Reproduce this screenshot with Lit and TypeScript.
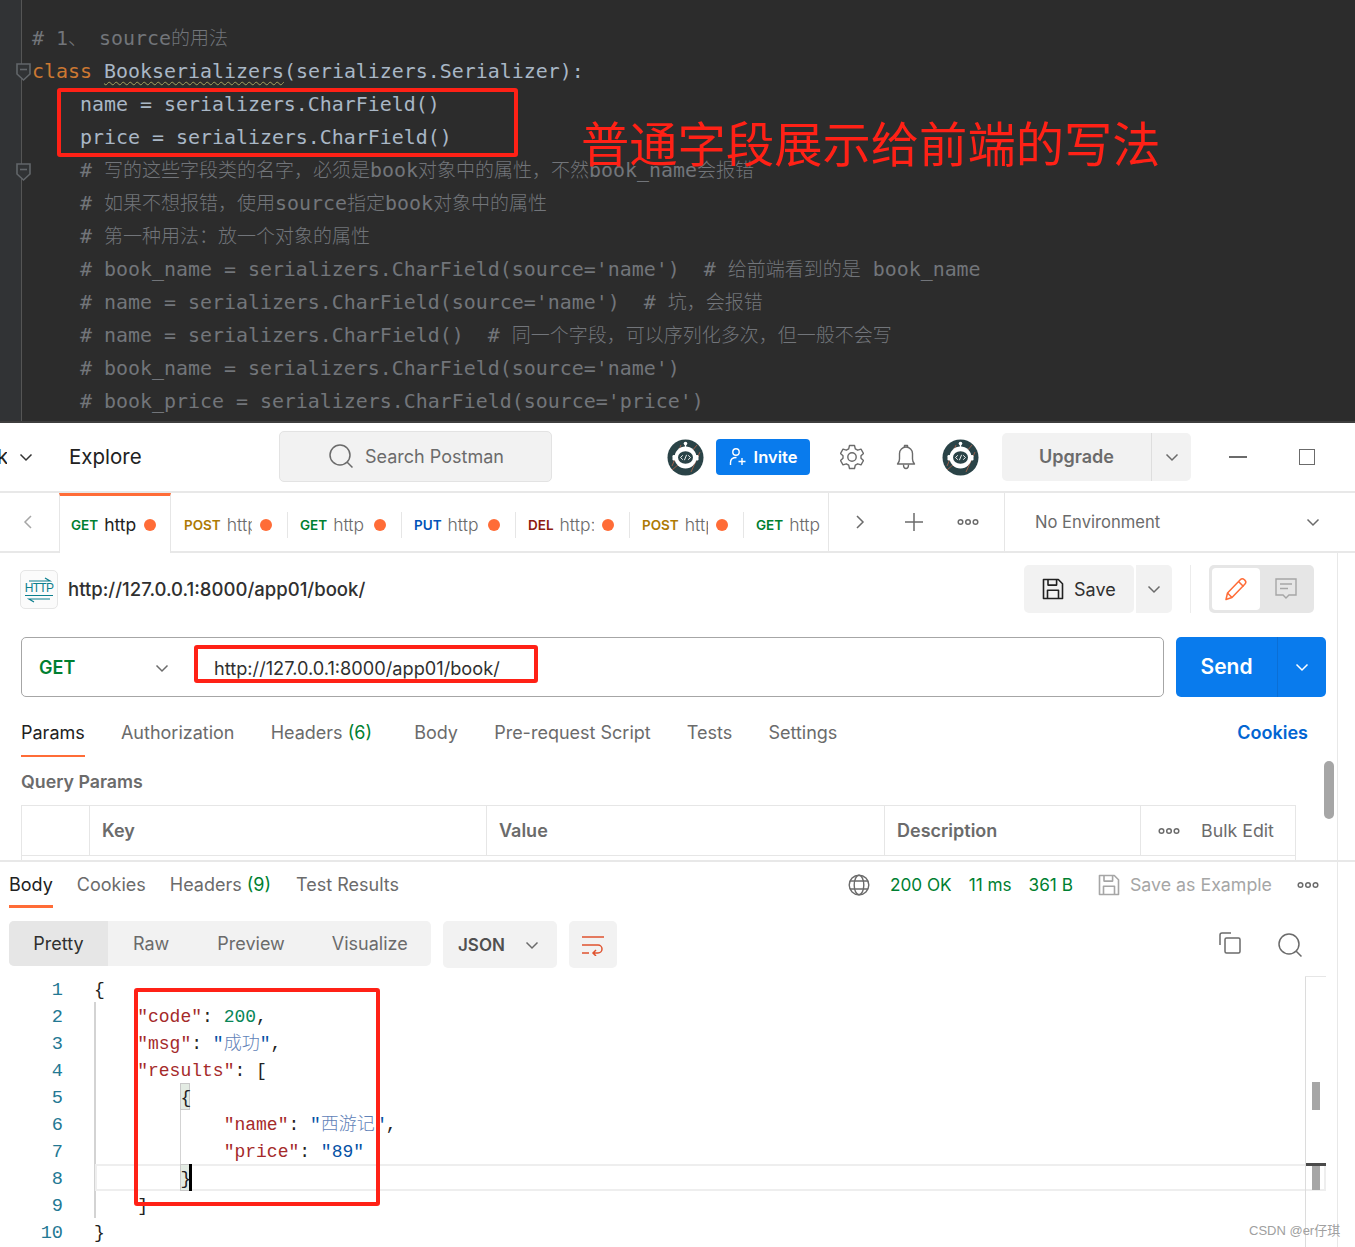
import { LitElement, html, css } from "lit";
import { customElement } from "lit/decorators.js";

const chev = (c = "#6b6b6b", s = 16) => html`<svg width=${s} height=${s} viewBox="0 0 16 16" fill="none" stroke=${c} stroke-width="1.5"><path d="M2.5 5.5 8 11l5.5-5.5"/></svg>`;
const dots = (c = "#6b6b6b") => html`<svg width="22" height="8" viewBox="0 0 22 8" fill="none" stroke=${c} stroke-width="1.5"><circle cx="3.5" cy="4" r="2.3"/><circle cx="11" cy="4" r="2.3"/><circle cx="18.5" cy="4" r="2.3"/></svg>`;
const search = (c = "#6b6b6b") => html`<svg width="26" height="26" viewBox="0 0 26 26" fill="none" stroke=${c} stroke-width="1.5"><circle cx="12" cy="12" r="10"/><path d="m19 19 5.5 5.5"/></svg>`;
const avatar = () => html`<svg width="37" height="37" viewBox="0 0 37 37">
  <circle cx="18.5" cy="18.5" r="18" fill="#2a4347"/>
  <path d="M5 27 14 6M24 33l9-20M30 6 25 12M5 31l7-6" stroke="#b5644a" stroke-width=".8" fill="none"/>
  <circle cx="18.5" cy="4.5" r="1.8" fill="#fff"/><path d="M18.5 5v4" stroke="#fff" stroke-width="1.4"/>
  <circle cx="18.5" cy="18.5" r="11" fill="#fff"/><rect x="5.5" y="16" width="3" height="5.5" rx="1.2" fill="#fff"/><rect x="28.5" y="16" width="3" height="5.5" rx="1.2" fill="#fff"/>
  <ellipse cx="18.5" cy="18.5" rx="7.5" ry="6.2" fill="#2a4347"/>
  <path d="m15.8 16.3-2.3 2.2 2.3 2.2M21.2 16.3l2.3 2.2-2.3 2.2M19.6 15.8l-2.2 5.4" stroke="#fff" stroke-width=".9" fill="none"/></svg>`;
const floppy = (c: string) => html`<svg width="22" height="22" viewBox="0 0 22 22" fill="none" stroke=${c} stroke-width="1.6" stroke-linejoin="round"><path d="M1.5 1.5h14.8l4.2 4.2v14.8H1.5z"/><path d="M6 1.5v5.6h8.6V1.5M5.5 20.5v-8.2h11v8.2"/></svg>`;

interface Tab { m: string; cls: string; label: string; dot: boolean; active?: boolean; }
const tabs: Tab[] = [
  { m: "GET", cls: "get", label: "http", dot: true, active: true },
  { m: "POST", cls: "post", label: "http://", dot: true },
  { m: "GET", cls: "get", label: "http", dot: true },
  { m: "PUT", cls: "put", label: "http", dot: true },
  { m: "DEL", cls: "del", label: "http://", dot: true },
  { m: "POST", cls: "post", label: "http://", dot: true },
  { m: "GET", cls: "get", label: "http", dot: false },
];

@customElement("code-panel")
class CodePanel extends LitElement {
  static styles = css`
    :host { display: flex; height: 423px; box-sizing: border-box; background: #2c2c2c; border-bottom: 2px solid #3e3e3e; overflow: hidden; font: 19.93px "DejaVu Sans Mono", "Noto Sans CJK SC", monospace; color: #a9b7c6; }
    .gutter { width: 22px; flex: none; background: #313335; border-right: 1px solid #555; position: relative; box-sizing: border-box; }
    .fold { position: absolute; left: 16px; }
    .lines { padding: 22px 0 0 10px; flex: 1; }
    .l { height: 33px; line-height: 33px; white-space: pre; }
    .c { color: #72757a; }
    .z { font-size: 19px; line-height: 0; font-family: "Noto Sans CJK SC", sans-serif; font-weight: 300; }
    .k { color: #cc7832; }
    .w { text-decoration: underline wavy #a5a25e 1px; text-underline-offset: 3px; }
  `;
  render() {
    const fold = (y: number) => html`<svg class="fold" style="top:${y}px" width="15" height="19" viewBox="0 0 15 19" fill="none" stroke="#62666a" stroke-width="1.6"><path d="M1 1h13v10l-6.5 6L1 11z" fill="#313335"/><path d="M4 6.5h7"/></svg>`;
    const z = (t: string) => html`<span class="z">${t}</span>`;
    return html`
      <div class="gutter">${fold(63)}${fold(163)}</div>
      <div class="lines">
        <div class="l c"># 1${z("、")} source${z("的用法")}</div>
        <div class="l"><span class="k">class</span> <span class="w">Bookserializers</span>(serializers.Serializer):</div>
        <div class="l">    name = serializers.CharField()</div>
        <div class="l">    price = serializers.CharField()</div>
        <div class="l c">    # ${z("写的这些字段类的名字，必须是")}book${z("对象中的属性，不然")}book_name${z("会报错")}</div>
        <div class="l c">    # ${z("如果不想报错，使用")}source${z("指定")}book${z("对象中的属性")}</div>
        <div class="l c">    # ${z("第一种用法：放一个对象的属性")}</div>
        <div class="l c">    # book_name = serializers.CharField(source='name')  # ${z("给前端看到的是")} book_name</div>
        <div class="l c">    # name = serializers.CharField(source='name')  # ${z("坑，会报错")}</div>
        <div class="l c">    # name = serializers.CharField()  # ${z("同一个字段，可以序列化多次，但一般不会写")}</div>
        <div class="l c">    # book_name = serializers.CharField(source='name')</div>
        <div class="l c">    # book_price = serializers.CharField(source='price')</div>
      </div>`;
  }
}

@customElement("pm-header")
class PmHeader extends LitElement {
  static styles = css`
    :host { display: flex; align-items: center; height: 70px; box-sizing: border-box; border-bottom: 2px solid #e8e8e8; font-family: Inter, sans-serif; position: relative; color: #212121; }
    .k { width: 10px; margin: 0 0 2px -3px; font-size: 20.5px; overflow: hidden; }
    .k-chev { margin: 0 0 0 11px; display: flex; }
    .explore { font-size: 20.5px; margin: 0 0 2px 35px; width: 210px; }
    .searchbox { width: 273px; height: 51px; box-sizing: border-box; background: #f2f2f2; border: 1px solid #e3e3e3; border-radius: 5px; display: flex; align-items: center; padding-left: 48px; gap: 11px; font-size: 18px; color: #6b6b6b; margin-bottom: 2px; }
    .av { display: flex; }
    .first { margin-left: 115px; }
    .invite { width: 94px; height: 36px; margin-left: 12px; background: #097bed; border-radius: 4px; color: #fff; font-weight: 600; font-size: 16.5px; display: flex; align-items: center; justify-content: center; gap: 7px; box-sizing: border-box; }
    .ico { display: flex; }
    .gear { margin-left: 30px; }
    .bell { margin-left: 32px; }
    .av2 { margin-left: 26px; }
    .up { margin-left: 23px; width: 189px; height: 48px; background: #f2f2f2; border-radius: 5px; display: flex; align-items: center; color: #6b6b6b; font-size: 18px; font-weight: 600; }
    .up .t { width: 149px; text-align: center; border-right: 1px solid #dedede; line-height: 48px; }
    .up .d { flex: 1; display: flex; justify-content: center; }
    .min { margin-left: 38px; width: 18px; height: 2px; background: #6b6b6b; }
    .max { margin-left: 52px; width: 16px; height: 16px; border: 1.5px solid #6b6b6b; box-sizing: border-box; }
  `;
  render() {
    return html`
      <div class="k">k</div><div class="k-chev">${chev("#333")}</div>
      <div class="explore">Explore</div>
      <div class="searchbox">${search()}<span>Search Postman</span></div>
      <div class="av first">${avatar()}</div>
      <div class="invite"><svg width="18" height="20" viewBox="0 0 18 20" fill="none" stroke="#fff" stroke-width="1.4"><circle cx="7" cy="5" r="3.2"/><path d="M1.5 18v-2.500C1.500 12 4 10.500 7.500 10.500M13 11v7M9.500 14.500h7"/></svg><span>Invite</span></div>
      <div class="ico gear"><svg width="24" height="26" viewBox="0 0 24 26" fill="none" stroke="#6b6b6b" stroke-width="1.4" stroke-linejoin="round"><circle cx="12" cy="13" r="4.2"/><path d="M9.5 1.5h5l.8 3.3 2.4 1.4 3.3-1 2.5 4.3-2.5 2.3v2.4l2.5 2.3-2.5 4.3-3.3-1-2.4 1.4-.8 3.3h-5l-.8-3.3-2.4-1.4-3.3 1L.5 16.5 3 14.2v-2.4L.5 9.5 3 5.2l3.3 1 2.4-1.4z"/></svg></div>
      <div class="ico bell"><svg width="20" height="26" viewBox="0 0 20 26" fill="none" stroke="#6b6b6b" stroke-width="1.4" stroke-linejoin="round"><path d="M1.5 20c1.5-1.5 2-3 2-5V9.500a6.500 6.500 0 0 1 13 0V15c0 2 .5 3.500 2 5z"/><path d="M8.500 3.200V1.500h3v1.700M7.500 20.500a2.500 4 0 0 0 5 0"/></svg></div>
      <div class="av av2">${avatar()}</div>
      <div class="up"><div class="t">Upgrade</div><div class="d">${chev()}</div></div>
      <div class="min"></div><div class="max"></div>`;
  }
}

@customElement("pm-tabs")
class PmTabs extends LitElement {
  static styles = css`
    :host { display: flex; height: 60px; box-sizing: border-box; border-bottom: 2px solid #e8e8e8; font-family: Inter, sans-serif; }
    .back { width: 59px; flex: none; display: flex; align-items: center; justify-content: center; padding-right: 4px; box-sizing: border-box; }
    .tab { width: 114px; flex: none; box-sizing: border-box; padding: 5px 15px 0 13px; display: flex; align-items: center; position: relative; height: 58px; }
    .tab.active { width: 112px; border-top: 3px solid #ff6c37; border-left: 1px solid #e6e6e6; border-right: 1px solid #e6e6e6; height: 60px; padding: 0 14px 0 11px; background: #fff; }
    .tab.first { width: 116px; }
    .tab:not(.active):not(.first)::before { content: ""; position: absolute; left: 0; top: 19px; height: 26px; width: 1px; background: #e6e6e6; }
    .tab.last { width: 85px; padding-right: 6px; }
    .m { font-size: 13.5px; font-weight: 600; margin-right: 6px; }
    .get { color: #007f31; } .post { color: #ad7a03; } .put { color: #0053b8; } .del { color: #8e1a10; }
    .lbl { flex: 1; overflow: hidden; white-space: nowrap; font-size: 17.5px; color: #6b6b6b; font-weight: 300; }
    .active .lbl { color: #212121; font-weight: 400; }
    .dot { width: 12px; height: 12px; border-radius: 50%; background: #ff6c37; margin-left: 8px; flex: none; }
    .tools { width: 177px; flex: none; display: flex; align-items: center; border-left: 1px solid #e6e6e6; border-right: 1px solid #e6e6e6; box-sizing: border-box; padding-left: 26px; }
    .plus { margin-left: 40px; display: flex; } .more { margin-left: 34px; display: flex; } .nx { display: flex; }
    .env { flex: 1; display: flex; align-items: center; padding-left: 30px; font-size: 16.6px; color: #6b6b6b; }
    .env span { flex: 1; }
    .env svg { margin-right: 34px; }
  `;
  render() {
    return html`
      <div class="back"><svg width="10" height="16" viewBox="0 0 10 16" fill="none" stroke="#a6a6a6" stroke-width="1.5"><path d="M8 2 2 8l6 6"/></svg></div>
      ${tabs.map((t, i) => html`<div class="tab ${t.active ? "active" : ""} ${i === 1 ? "first" : ""} ${i === 6 ? "last" : ""}">
        <span class="m ${t.cls}">${t.m}</span><span class="lbl">${t.label}</span>${t.dot ? html`<span class="dot"></span>` : ""}</div>`)}
      <div class="tools">
        <span class="nx"><svg width="10" height="16" viewBox="0 0 10 16" fill="none" stroke="#6b6b6b" stroke-width="1.5"><path d="m2 2 6 6-6 6"/></svg></span>
        <span class="plus"><svg width="18" height="18" viewBox="0 0 18 18" stroke="#6b6b6b" stroke-width="1.5"><path d="M9 0v18M0 9h18"/></svg></span>
        <span class="more">${dots()}</span>
      </div>
      <div class="env"><span>No Environment</span>${chev()}</div>`;
  }
}

@customElement("pm-request")
class PmRequest extends LitElement {
  static styles = css`
    :host { display: block; height: 307px; overflow: hidden; font-family: Inter, sans-serif; color: #212121; position: relative; }
    .title { display: flex; align-items: center; height: 72px; padding-left: 20px; width: 1314px; box-sizing: border-box; }
    .hicon { width: 38px; height: 39px; box-sizing: border-box; border: 1px solid #e6e6e6; border-radius: 5px; display: flex; align-items: center; justify-content: center; position: relative; background: #fbfbfb; }
    .hicon b { font: 400 12px "Liberation Sans", sans-serif; letter-spacing: -.7px; color: #0c7f8e; line-height: 11px; border-bottom: 1px solid #0c7f8e; padding: 1px 0; }
    .hicon svg { position: absolute; left: 5px; top: 5px; }
    .name { font-size: 18.55px; font-weight: 500; margin-left: 10px; flex: 1; color: #303030; }
    .save { width: 110px; height: 48px; background: #f2f2f2; border-radius: 5px; display: flex; align-items: center; padding-left: 18px; box-sizing: border-box; gap: 10px; font-size: 18px; color: #303030; }
    .sd { width: 36px; height: 48px; margin-left: 2px; background: #f2f2f2; border-radius: 0 5px 5px 0; display: flex; align-items: center; justify-content: center; }
    .sep { width: 1px; height: 48px; background: #ececec; margin: 0 18px; }
    .toggle { width: 105px; height: 48px; background: #e6e6e6; border-radius: 5px; display: flex; align-items: center; padding: 3px; box-sizing: border-box; }
    .pen { width: 48px; height: 42px; background: #fff; border-radius: 4px; display: flex; align-items: center; justify-content: center; }
    .cm { flex: 1; display: flex; justify-content: center; }
    .urlrow { display: flex; gap: 12px; padding: 12px 0 0 21px; width: 1326px; box-sizing: border-box; }
    .url { flex: 1; height: 60px; box-sizing: border-box; border: 1px solid #a6a6a6; border-radius: 5px; display: flex; align-items: center; font-size: 18.2px; color: #303030; padding-top: 1px; }
    .method { width: 175px; padding-left: 17px; box-sizing: border-box; display: flex; align-items: center; color: #007f31; font-weight: 600; font-size: 18px; }
    .method span { width: 115px; }
    .u { margin-left: 17px; }
    .send { width: 150px; height: 60px; background: #097bed; border-radius: 5px; display: flex; color: #fff; font-size: 21px; font-weight: 600; }
    .send .t { width: 101px; text-align: center; line-height: 60px; border-right: 1px solid #0a6fd6; }
    .send .d { flex: 1; display: flex; align-items: center; justify-content: center; }
    .ptabs { display: flex; align-items: flex-end; height: 60px; padding: 0 47px 0 21px; width: 1355px; box-sizing: border-box; font-size: 18px; color: #6b6b6b; gap: 36.2px; }
    .ptabs > span { position: relative; height: 48px; line-height: 48px; }
    .ptabs .on { color: #212121; }
    .ptabs .on::after { content: ""; position: absolute; left: 0; right: 0; bottom: 0; height: 2px; background: #ff6c37; }
    .ptabs .g { color: #007f31; }
    .ptabs .cook { margin-left: auto; color: #0265d2; font-weight: 600; font-size: 18px; }
    .qp { font-size: 17.8px; font-weight: 600; color: #6b6b6b; padding: 12px 0 0 21px; height: 25px; line-height: 25px; }
    .table { margin: 11px 0 0 21px; width: 1275px; border: 1px solid #e6e6e6; height: 60px; box-sizing: border-box; display: grid; grid-template-columns: 68px 397px 398px 256px 1fr; border-bottom: 0; font-size: 18px; font-weight: 600; color: #6b6b6b; }
    .table > div { height: 50px; border-bottom: 1px solid #e6e6e6; border-right: 1px solid #e6e6e6; display: flex; align-items: center; padding-left: 12px; box-sizing: border-box; }
    .table > div:last-child { border-right: 0; }
    .table .bulk { font-weight: 400; padding-left: 17px; font-size: 17.8px; gap: 21px; }
    .thumb { position: absolute; left: 1324px; top: 208px; width: 10px; height: 58px; border-radius: 5px; background: #a6a6a6; }
  `;
  render() {
    return html`
      <div class="title">
        <div class="hicon"><svg width="27" height="28" viewBox="0 0 27 28" fill="none" stroke="#0c7f8e" stroke-width="1.2"><path d="M3 5h21l-5-3M24 23H3l5 3"/></svg><b>HTTP</b></div>
        <div class="name">http://127.0.0.1:8000/app01/book/</div>
        <div class="save">${floppy("#212121")}<span>Save</span></div>
        <div class="sd">${chev()}</div>
        <div class="sep"></div>
        <div class="toggle">
          <div class="pen"><svg width="24" height="24" viewBox="0 0 24 24" fill="none" stroke="#ff6c37" stroke-width="1.5" stroke-linejoin="round"><path d="M2 22.500 3.500 16 16.500 2.500a2.500 2.500 0 0 1 3.600 0l.9.9a2.500 2.500 0 0 1 0 3.500L8 20.500z"/><path d="m3.500 16 4.500 4.500M14.500 4.500l5 5"/></svg></div>
          <div class="cm"><svg width="22" height="22" viewBox="0 0 22 22" fill="none" stroke="#a6a6a6" stroke-width="1.4"><path d="M1 1h20v16h-7l-3 3-3-3H1z"/><path d="M5 6h12M5 10.500h8"/></svg></div>
        </div>
      </div>
      <div class="urlrow">
        <div class="url"><div class="method"><span>GET</span>${chev()}</div><div class="u">http://127.0.0.1:8000/app01/book/</div></div>
        <div class="send"><div class="t">Send</div><div class="d">${chev("#fff")}</div></div>
      </div>
      <div class="ptabs">
        <span class="on">Params</span><span>Authorization</span><span>Headers <span class="g">(6)</span></span><span style="margin-left:6px">Body</span><span>Pre-request Script</span><span>Tests</span><span>Settings</span><span class="cook">Cookies</span>
      </div>
      <div class="qp">Query Params</div>
      <div class="table"><div></div><div>Key</div><div>Value</div><div>Description</div><div class="bulk">${dots()}<span>Bulk Edit</span></div></div>
      <div class="thumb"></div>`;
  }
}

@customElement("pm-response")
class PmResponse extends LitElement {
  static styles = css`
    :host { display: block; height: 387px; overflow: hidden; position: relative; border-top: 2px solid #e8e8e8; box-sizing: border-box; font-family: Inter, sans-serif; color: #6b6b6b; }
    .rt { display: flex; align-items: center; height: 46px; padding-left: 9px; font-size: 18px; width: 1337px; box-sizing: border-box; }
    .rt > span { position: relative; height: 46px; line-height: 46px; margin-right: 24px; white-space: nowrap; }
    .on { color: #212121; }
    .on::after { content: ""; position: absolute; left: 0; right: 0; bottom: 0; height: 3px; background: #ff6c37; }
    .g { color: #007f31; }
    .stat { margin-left: auto; display: flex; align-items: center; font-size: 17.2px; padding: 0 18px 1px 0; color: #007f31; }
    .stat .globe { display: flex; margin-right: 20px; }
    .stat .ms { margin: 0 17px; }
    .stat .sv { display: flex; align-items: center; gap: 10px; margin-left: 25px; color: #a6a6a6; font-size: 17.8px; }
    .stat .mr { display: flex; margin-left: 25px; }
    .tb { display: flex; align-items: flex-start; padding: 13px 0 0 9px; height: 54px; box-sizing: border-box; width: 1326px; font-size: 18px; }
    .seg { display: flex; width: 422px; height: 45px; background: #f2f2f2; border-radius: 5px; overflow: hidden; align-items: center; }
    .seg span { line-height: 45px; }
    .seg .sel { width: 99px; background: #e6e6e6; text-align: center; color: #303030; margin-right: 25px; }
    .seg span:nth-child(3) { margin-left: 48px; } .seg span:nth-child(4) { margin-left: 47px; }
    .json { width: 114px; height: 47px; margin-left: 12px; background: #f2f2f2; border-radius: 5px; display: flex; align-items: center; padding-left: 15px; box-sizing: border-box; font-weight: 600; font-size: 17px; gap: 19px; color: #505050; }
    .wrap { width: 48px; height: 47px; margin-left: 12px; background: #f2f2f2; border-radius: 5px; display: flex; align-items: center; justify-content: center; }
    .copy { margin-left: auto; display: flex; padding-top: 11px; }
    .find { display: flex; margin-left: 36px; padding-top: 11px; margin-right: 23px; }
    .ed { display: flex; height: 275px; margin-top: 14px; position: relative; font: 18px "Liberation Mono", "Noto Sans CJK SC", monospace; color: #222; }
    .nums { width: 63px; flex: none; text-align: right; color: #237893; font-size: 18.6px; padding-top: 1px; }
    .nums div { height: 27px; line-height: 27px; }
    .code { margin-left: 31px; position: relative; z-index: 1; padding-top: 1px; }
    .ln { height: 27px; line-height: 27px; white-space: pre; }
    .key { color: #a52a2a; } .num { color: #098658; } .str { color: #0451a5; }
    .cjk { color: #5f82b8; font-weight: 300; line-height: 0; }
    .guide { position: absolute; width: 1px; background: #d3d3d3; }
    .g1 { left: 94px; top: 26px; height: 216px; width: 2px; }
    .g2 { left: 180px; top: 134px; height: 54px; }
    .active-line { position: absolute; left: 95px; top: 188px; width: 1231px; height: 27px; box-sizing: border-box; border: 2px solid #eeeeee; }
    .bk { position: absolute; left: 180px; width: 10px; height: 27px; background: #e3ebe3; border: 1px solid #c8c8c8; box-sizing: border-box; }
    .cursor { position: absolute; left: 189px; top: 188px; width: 3px; height: 27px; background: #000; z-index: 2; }
    .rail { position: absolute; left: 1305px; top: 0; bottom: 0; width: 1px; background: #dcdcdc; }
    .mark { position: absolute; left: 1312px; width: 8px; background: #a6a6a6; z-index: 2; }
    .mline { position: absolute; left: 1306px; width: 20px; top: 187px; height: 3px; background: #4a4a4a; z-index: 3; }
    .rail-top { position: absolute; left: 1305px; width: 21px; top: 0; height: 1px; background: #e6e6e6; }
  `;
  render() {
    const k = (t: string) => html`<span class="key">${t}</span>`;
    return html`
      <div class="rt">
        <span class="on">Body</span><span>Cookies</span><span style="margin-right:25px">Headers <span class="g">(9)</span></span><span>Test Results</span>
        <div class="stat">
          <span class="globe"><svg width="22" height="22" viewBox="0 0 22 22" fill="none" stroke="#6b6b6b" stroke-width="1.4"><circle cx="11" cy="11" r="9.8"/><ellipse cx="11" cy="11" rx="4.8" ry="9.8"/><path d="M2 7h18M2 15h18"/></svg></span>
          <span>200 OK</span><span class="ms">11 ms</span><span>361 B</span>
          <span class="sv">${floppy("#a6a6a6")}<span>Save as Example</span></span>
          <span class="mr">${dots()}</span>
        </div>
      </div>
      <div class="tb">
        <div class="seg"><span class="sel">Pretty</span><span>Raw</span><span>Preview</span><span>Visualize</span></div>
        <div class="json"><span>JSON</span>${chev()}</div>
        <div class="wrap"><svg width="24" height="22" viewBox="0 0 24 22" fill="none" stroke="#e0532f" stroke-width="1.5"><path d="M1 3h22M1 11h16a4 4 0 0 1 0 8h-5M15 16l-3 3 3 3M1 19h7"/></svg></div>
        <span class="copy"><svg width="22" height="22" viewBox="0 0 22 22" fill="none" stroke="#6b6b6b" stroke-width="1.5"><path d="M1 13V3a2 2 0 0 1 2-2h9"/><rect x="6" y="6" width="15" height="15" rx="1.5"/></svg></span>
        <span class="find">${search()}</span>
      </div>
      <div class="ed">
        <div class="nums">${[1, 2, 3, 4, 5, 6, 7, 8, 9, 10].map((n) => html`<div>${n}</div>`)}</div>
        <div class="code">
          <div class="ln">{</div>
          <div class="ln">    ${k('"code"')}: <span class="num">200</span>,</div>
          <div class="ln">    ${k('"msg"')}: <span class="str">"<span class="cjk">成功</span>"</span>,</div>
          <div class="ln">    ${k('"results"')}: [</div>
          <div class="ln">        {</div>
          <div class="ln">            ${k('"name"')}: <span class="str">"<span class="cjk">西游记</span>"</span>,</div>
          <div class="ln">            ${k('"price"')}: <span class="str">"89"</span></div>
          <div class="ln">        }</div>
          <div class="ln">    ]</div>
          <div class="ln">}</div>
        </div>
        <div class="guide g1"></div><div class="guide g2"></div>
        <div class="active-line"></div>
        <div class="bk" style="top:107px"></div><div class="bk" style="top:188px"></div>
        <div class="cursor"></div>
        <div class="rail"></div><div class="rail-top"></div>
        <div class="mark" style="top:106px;height:28px"></div>
        <div class="mark" style="top:189px;height:25px"></div>
        <div class="mline"></div>
      </div>`;
  }
}

@customElement("app-root")
export class AppRoot extends LitElement {
  static styles = css`
    :host { display: block; width: 1355px; height: 1247px; position: relative; overflow: hidden; background: #fff; }
    .vline { position: absolute; left: 1337px; top: 553px; bottom: 0; width: 1px; background: #e8e8e8; }
    .box { position: absolute; box-sizing: border-box; border: 4px solid #ff2116; border-radius: 3px; z-index: 5; }
    .b1 { left: 57px; top: 88px; width: 461px; height: 69px; }
    .b2 { left: 194px; top: 645px; width: 344px; height: 38px; }
    .b3 { left: 134px; top: 988px; width: 246px; height: 218px; }
    .note { position: absolute; left: 581px; top: 106px; font: 400 48.3px/70px "Noto Sans CJK SC", sans-serif; color: #ff2116; white-space: nowrap; z-index: 5; }
    .mark { position: absolute; left: 1249px; top: 1220px; font: 13px "Liberation Sans", "Noto Sans CJK SC", sans-serif; color: #a0a0a0; z-index: 5; }
  `;
  render() {
    return html`
      <code-panel></code-panel>
      <pm-header></pm-header>
      <pm-tabs></pm-tabs>
      <pm-request></pm-request>
      <pm-response></pm-response>
      <div class="vline"></div>
      <div class="box b1"></div><div class="box b2"></div><div class="box b3"></div>
      <div class="note">普通字段展示给前端的写法</div>
      <div class="mark">CSDN @er仔琪</div>`;
  }
}
